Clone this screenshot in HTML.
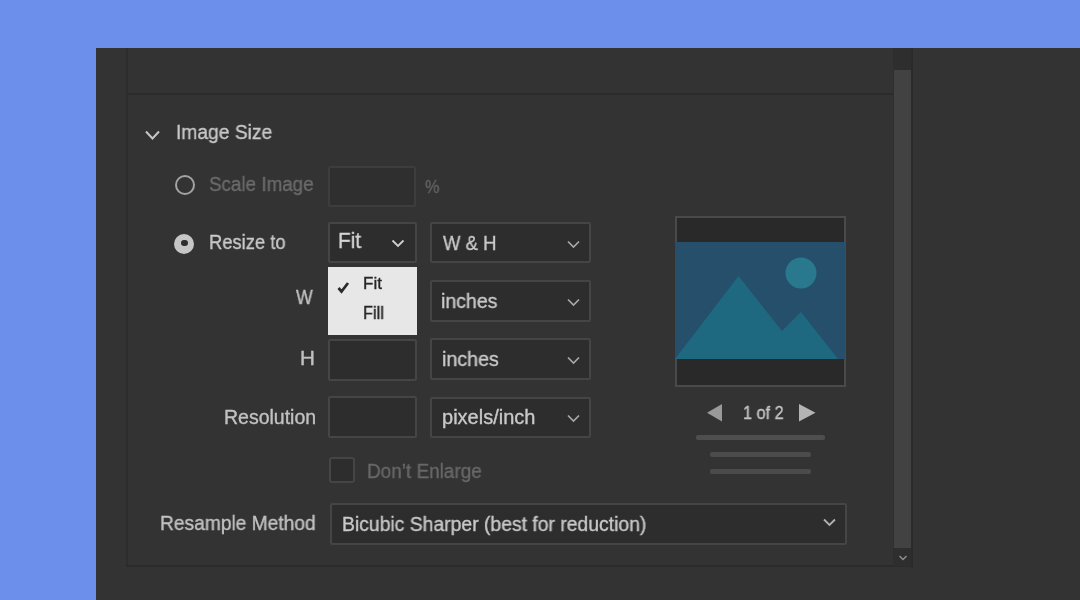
<!DOCTYPE html>
<html><head><meta charset="utf-8">
<style>
*{margin:0;padding:0;box-sizing:border-box}
html,body{width:1080px;height:600px;overflow:hidden;background:#6c8fec}
body{position:relative;font-family:"Liberation Sans",sans-serif}
.a{position:absolute}
.t{position:absolute;white-space:nowrap;line-height:1;transform-origin:0 0;-webkit-text-stroke:0.35px currentColor;will-change:transform}
.box{position:absolute;background:#2d2d2d;border:2px solid #454545;border-radius:2px}
</style></head><body>
<div class="a" style="left:96px;top:48px;width:984px;height:552px;background:#333333"></div>
<!-- inner panel borders -->
<div class="a" style="left:126px;top:48px;width:2px;height:519px;background:#2d2d2d"></div>
<div class="a" style="left:127px;top:93px;width:766px;height:2px;background:#2b2b2b"></div>
<div class="a" style="left:126px;top:565px;width:787px;height:2px;background:#2b2b2b"></div>
<!-- scrollbar -->
<div class="a" style="left:893px;top:48px;width:19px;height:518px;background:#2e2e2e"></div>
<div class="a" style="left:894px;top:70px;width:17px;height:478px;background:#424242"></div>
<div class="a" style="left:911px;top:48px;width:2px;height:520px;background:#2b2b2b"></div>
<svg class="a" style="left:896px;top:552px" width="14" height="10" viewBox="0 0 14 10"><path d="M3.5 4 L7 7.5 L10.5 4" fill="none" stroke="#8e8e8e" stroke-width="1.5"/></svg>

<!-- header chevron -->
<svg class="a" style="left:144px;top:129px" width="18" height="13" viewBox="0 0 18 13"><path d="M2 2.5 L8.5 9.5 L15 2.5" fill="none" stroke="#c6c6c6" stroke-width="2"/></svg>

<!-- radios -->
<div class="a" style="left:175px;top:175px;width:20px;height:20px;border:2px solid #a3a3a3;border-radius:50%"></div>
<div class="a" style="left:174px;top:234px;width:20px;height:20px;background:#c6c6c6;border-radius:50%"></div>
<div class="a" style="left:181.3px;top:240px;width:6.4px;height:6.4px;background:#2e2e2e;border-radius:50%"></div>

<!-- boxes -->
<div class="box" style="left:328px;top:166px;width:88px;height:41px;background:#2f2f2f;border-color:#3d3d3d"></div>
<div class="box" style="left:328px;top:222px;width:89px;height:41px"></div>
<svg class="a" style="left:390px;top:238px" width="16" height="12" viewBox="0 0 16 12"><path d="M2.5 2.5 L8 8 L13.5 2.5" fill="none" stroke="#cfcfcf" stroke-width="1.8"/></svg>
<div class="box" style="left:430px;top:222px;width:161px;height:41px"></div>
<svg class="a" style="left:566px;top:239px" width="15" height="11" viewBox="0 0 15 11"><path d="M2 2.5 L7.5 8 L13 2.5" fill="none" stroke="#a8a8a8" stroke-width="1.7"/></svg>
<div class="box" style="left:430px;top:280px;width:161px;height:42px"></div>
<svg class="a" style="left:566px;top:297px" width="15" height="11" viewBox="0 0 15 11"><path d="M2 2.5 L7.5 8 L13 2.5" fill="none" stroke="#a8a8a8" stroke-width="1.7"/></svg>
<div class="box" style="left:328px;top:339px;width:89px;height:42px"></div>
<div class="box" style="left:430px;top:338px;width:161px;height:42px"></div>
<svg class="a" style="left:566px;top:355px" width="15" height="11" viewBox="0 0 15 11"><path d="M2 2.5 L7.5 8 L13 2.5" fill="none" stroke="#a8a8a8" stroke-width="1.7"/></svg>
<div class="box" style="left:328px;top:396px;width:89px;height:42px"></div>
<div class="box" style="left:430px;top:397px;width:161px;height:41px"></div>
<svg class="a" style="left:566px;top:413px" width="15" height="11" viewBox="0 0 15 11"><path d="M2 2.5 L7.5 8 L13 2.5" fill="none" stroke="#a8a8a8" stroke-width="1.7"/></svg>
<div class="a" style="left:329px;top:457px;width:26px;height:26px;border:2px solid #454545;border-radius:3px;background:#2d2d2d"></div>
<div class="box" style="left:330px;top:503px;width:517px;height:42px"></div>
<svg class="a" style="left:822px;top:517px" width="15" height="11" viewBox="0 0 15 11"><path d="M2 2.5 L7.5 8 L13 2.5" fill="none" stroke="#b0b0b0" stroke-width="1.9"/></svg>

<!-- dropdown -->
<div class="a" style="left:328px;top:267px;width:89px;height:68px;background:#e7e7e7"></div>
<svg class="a" style="left:336px;top:280px" width="15" height="15" viewBox="0 0 15 15"><path d="M2.5 8 L5.5 11.5 L12 3" fill="none" stroke="#2a2a2a" stroke-width="2.7"/></svg>

<!-- preview -->
<div class="a" style="left:675px;top:216px;width:171px;height:171px;border:2px solid #4a4a4a;background:#292929"></div>
<svg class="a" style="left:675px;top:242px" width="170" height="117" viewBox="675 242 170 117">
<rect x="675" y="242" width="170" height="117" fill="#254f6b"/>
<circle cx="801" cy="273" r="15.5" fill="#29788e"/>
<polygon points="675,359 738.5,276 782,331 801,312 838,359" fill="#1e6880"/>
</svg>

<!-- nav -->
<svg class="a" style="left:700px;top:400px" width="120" height="26" viewBox="700 400 120 26"><polygon points="707,412.7 722,404 722,421.5" fill="#9a9a9a"/><polygon points="799,404 815.5,412.7 799,421.5" fill="#b4b4b4"/></svg>
<div class="a" style="left:696px;top:435px;width:129px;height:5px;background:#4e4e4e;border-radius:2px"></div>
<div class="a" style="left:710px;top:452px;width:101px;height:5px;background:#4b4b4b;border-radius:2px"></div>
<div class="a" style="left:710px;top:469px;width:101px;height:5px;background:#4b4b4b;border-radius:2px"></div>

<div class="t" id="imgsize" style="left:175.80px;top:121.66px;font-size:20px;color:#c9c9c9;transform:scaleX(0.9612);">Image Size</div>
<div class="t" id="scale" style="left:209.40px;top:175.30px;font-size:19.6px;color:#6b6b6b;transform:scaleX(0.9607);">Scale Image</div>
<div class="t" id="pct" style="left:425.20px;top:176.91px;font-size:19px;color:#636363;transform:scaleX(0.8543);">%</div>
<div class="t" id="resize" style="left:209.00px;top:232.06px;font-size:20px;color:#c9c9c9;transform:scaleX(0.9186);">Resize to</div>
<div class="t" id="fit" style="left:337.60px;top:229.77px;font-size:22px;color:#d4d4d4;transform:scaleX(0.9446);">Fit</div>
<div class="t" id="wh" style="left:443.20px;top:233.01px;font-size:20.3px;color:#c9c9c9;transform:scaleX(0.9114);">W &amp; H</div>
<div class="t" id="wlab" style="left:296.10px;top:287.88px;font-size:19.5px;color:#c2c2c2;transform:scaleX(0.9089);">W</div>
<div class="t" id="inch1" style="left:441.20px;top:290.66px;font-size:20px;color:#c9c9c9;transform:scaleX(0.9759);">inches</div>
<div class="t" id="hlab" style="left:300.40px;top:348.88px;font-size:19.5px;color:#c2c2c2;transform:scaleX(1.0556);">H</div>
<div class="t" id="inch2" style="left:441.80px;top:348.66px;font-size:20px;color:#c9c9c9;transform:scaleX(0.9833);">inches</div>
<div class="t" id="resol" style="left:223.50px;top:407.78px;font-size:19.5px;color:#c2c2c2;transform:scaleX(0.9950);">Resolution</div>
<div class="t" id="ppi" style="left:441.80px;top:406.76px;font-size:20px;color:#c9c9c9;transform:scaleX(1.0002);">pixels/inch</div>
<div class="t" id="dont" style="left:366.60px;top:462.18px;font-size:19.5px;color:#686868;transform:scaleX(0.9715);">Don’t Enlarge</div>
<div class="t" id="resamp" style="left:160.20px;top:514.43px;font-size:19.8px;color:#c2c2c2;transform:scaleX(0.9696);">Resample Method</div>
<div class="t" id="bicubic" style="left:341.60px;top:514.68px;font-size:19.5px;color:#c9c9c9;transform:scaleX(0.9922);">Bicubic Sharper (best for reduction)</div>
<div class="t" id="oneof2" style="left:742.60px;top:403.55px;font-size:18px;color:#c4c4c4;transform:scaleX(0.9026);">1 of 2</div>
<div class="t" id="ddfit" style="left:363.00px;top:275.20px;font-size:17px;color:#262626;transform:scaleX(0.9972);">Fit</div>
<div class="t" id="ddfill" style="left:363.00px;top:304.58px;font-size:17.5px;color:#262626;transform:scaleX(0.9334);">Fill</div>
</body></html>
